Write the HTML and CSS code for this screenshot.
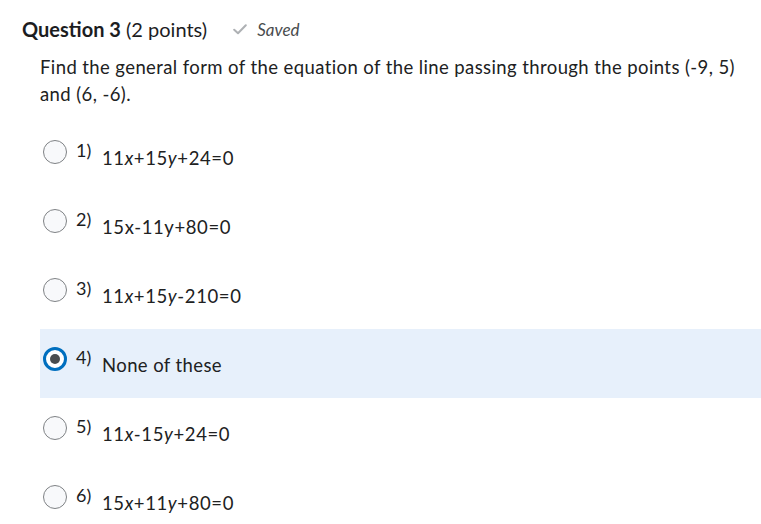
FILE: index.html
```html
<!DOCTYPE html>
<html>
<head>
<meta charset="utf-8">
<link rel="stylesheet" href="styles.css">
</head>
<body>
<div class="question">
  <div class="q-header">
    <span class="q-title"><b>Question 3</b> (2 points)</span>
    <span class="saved">
      <svg class="check" width="14" height="11" viewBox="0 0 14 11"><path d="M1.2 5.8 L5 9.3 L12.8 1.2" fill="none" stroke="#aeb1b4" stroke-width="2" stroke-linecap="round" stroke-linejoin="round"/></svg>
      <span class="saved-text">Saved</span>
    </span>
  </div>
  <p class="q-text">Find the general form of the equation of the line passing through the points (-9, 5) and (6, -6).</p>
  <div class="options">
    <div class="option"><span class="radio"></span><span class="num">1)</span><span class="ans math">11<i>x</i>+15<i>y</i>+24=0</span></div>
    <div class="option"><span class="radio"></span><span class="num">2)</span><span class="ans math">15x-11y+80=0</span></div>
    <div class="option"><span class="radio"></span><span class="num">3)</span><span class="ans math">11<i>x</i>+15<i>y</i>-210=0</span></div>
    <div class="option selected"><span class="radio"></span><span class="num">4)</span><span class="ans">None of these</span></div>
    <div class="option"><span class="radio"></span><span class="num">5)</span><span class="ans math">11<i>x</i>-15<i>y</i>+24=0</span></div>
    <div class="option"><span class="radio"></span><span class="num">6)</span><span class="ans math">15<i>x</i>+11<i>y</i>+80=0</span></div>
  </div>
</div>
</body>
</html>
```
FILE: styles.css
```css
html, body {
  margin: 0;
  padding: 0;
  background: #ffffff;
}
body {
  font-family: Lato, "Open Sans", sans-serif;
  color: #202122;
}
.question {
  padding-top: 16px;
}
.q-header {
  display: flex;
  align-items: center;
  padding-left: 22px;
  height: 26px;
}
.q-title {
  font-size: 20px;
  font-weight: 400;
  color: #1c1d1f;
}
.q-title b {
  font-weight: 700;
}
.saved {
  display: flex;
  align-items: center;
  margin-left: 26px;
}
.check {
  display: block;
  margin-top: 1px;
}
.saved-text {
  font-style: italic;
  font-size: 17px;
  color: #494c4e;
  margin-left: 10px;
}
.q-text {
  margin: 0;
  padding: 12px 0 0 40px;
  max-width: 705px;
  font-size: 18.5px;
  letter-spacing: 0.4px;
  line-height: 27px;
}
.options {
  margin-top: 14px;
  padding-left: 40px;
}
.option {
  display: flex;
  align-items: flex-start;
  height: 69px;
  box-sizing: border-box;
  padding-top: 18px;
  padding-left: 3px;
}
.option.selected {
  background: #e7f0fb;
}
.radio {
  width: 24px;
  height: 24px;
  border: 1px solid #7f8285;
  border-radius: 50%;
  background: #f8f9fb;
  flex: none;
  box-sizing: border-box;
  position: relative;
}
.selected .radio {
  border: 3px solid #006fbf;
  background: #fff;
}
.selected .radio::after {
  content: "";
  position: absolute;
  left: 50%;
  top: 50%;
  width: 10px;
  height: 10px;
  margin: -5px 0 0 -5px;
  border-radius: 50%;
  background: #494c4e;
}
.num {
  width: 26px;
  flex: none;
  margin-left: 9px;
  font-size: 18px;
  line-height: 21.6px;
  color: #1c1d1f;
}
.ans {
  font-size: 18.5px;
  letter-spacing: 0.4px;
  line-height: 22px;
  margin-top: 7px;
}
.ans.math {
  letter-spacing: 0.6px;
}
.ans i {
  font-style: italic;
}
```
